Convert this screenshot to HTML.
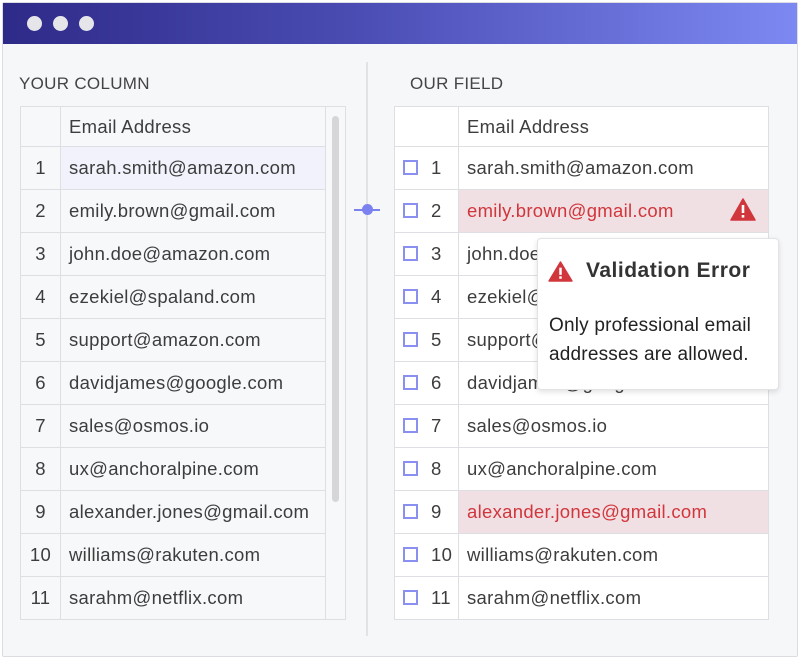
<!DOCTYPE html>
<html><head><style>
*{margin:0;padding:0;box-sizing:border-box}
body{width:800px;height:659px;background:#fff;font-family:"Liberation Sans",sans-serif;overflow:hidden;position:relative}
.win{position:absolute;left:2px;top:2px;width:796px;height:655px;border:1px solid #dcdde0;background:#f6f7f9;border-radius:2px}
.bar{position:absolute;left:0;top:0;right:0;height:41px;background:linear-gradient(90deg,#2e2a88,#4b4db4 45%,#7d89f2)}
.dot{position:absolute;top:13px;width:15px;height:15px;border-radius:50%;background:#e6e6ea}
.lbl{position:absolute;font-size:17px;color:#444;letter-spacing:.3px}
table{position:absolute;border-collapse:collapse;table-layout:fixed;font-size:18.5px;letter-spacing:.3px;color:#3d3d3d}
td{border:1px solid #dedfe2;height:43px;padding:0 8px;white-space:nowrap;overflow:visible}
.tl{left:20px;top:106px;width:325px;background:#f7f8fa}
.tr{left:394px;top:106px;width:374px;background:#fff}
tr.h td{height:40px}
.n{text-align:center}
.err td.e{background:#f1e0e3;color:#d0363c}
.cb{display:inline-block;width:15px;height:15px;border:2px solid #8a90f0;vertical-align:middle;margin-right:13px;position:relative;top:-2px}
.tip{position:absolute;left:537px;top:238px;width:242px;height:152px;background:#fff;border:1px solid #e3e3e6;border-radius:4px;box-shadow:0 2px 6px rgba(0,0,0,.12)}
</style></head><body>
<div class="win">
<div class="bar"><div class="dot" style="left:24px"></div><div class="dot" style="left:50px"></div><div class="dot" style="left:76px"></div></div>
</div>
<div class="lbl" style="left:19px;top:74px">YOUR COLUMN</div>
<div class="lbl" style="left:410px;top:74px">OUR FIELD</div>
<div style="position:absolute;left:366px;top:62px;width:2px;height:574px;background:#e2e3e6"></div>
<div style="position:absolute;left:354px;top:209px;width:26px;height:2px;background:#7b82ef"></div>
<div style="position:absolute;left:362px;top:204px;width:11px;height:11px;border-radius:50%;background:#7b82ef"></div>
<table class="tl">
<colgroup><col style="width:40px"><col style="width:265px"><col style="width:20px"></colgroup>
<tr class="h"><td></td><td>Email Address</td><td rowspan="12"></td></tr>
<tr><td class="n">1</td><td style="background:#f2f2fd">sarah.smith@amazon.com</td></tr>
<tr><td class="n">2</td><td>emily.brown@gmail.com</td></tr>
<tr><td class="n">3</td><td>john.doe@amazon.com</td></tr>
<tr><td class="n">4</td><td>ezekiel@spaland.com</td></tr>
<tr><td class="n">5</td><td>support@amazon.com</td></tr>
<tr><td class="n">6</td><td>davidjames@google.com</td></tr>
<tr><td class="n">7</td><td>sales@osmos.io</td></tr>
<tr><td class="n">8</td><td>ux@anchoralpine.com</td></tr>
<tr><td class="n">9</td><td>alexander.jones@gmail.com</td></tr>
<tr><td class="n">10</td><td>williams@rakuten.com</td></tr>
<tr><td class="n">11</td><td>sarahm@netflix.com</td></tr>
</table>
<div style="position:absolute;left:332px;top:116px;width:7px;height:386px;border-radius:4px;background:#d6d6d8"></div>
<table class="tr">
<colgroup><col style="width:64px"><col style="width:310px"></colgroup>
<tr class="h"><td></td><td>Email Address</td></tr>
<tr><td><span class="cb"></span>1</td><td>sarah.smith@amazon.com</td></tr>
<tr class="err"><td><span class="cb"></span>2</td><td class="e">emily.brown@gmail.com</td></tr>
<tr><td><span class="cb"></span>3</td><td>john.doe@amazon.com</td></tr>
<tr><td><span class="cb"></span>4</td><td>ezekiel@spaland.com</td></tr>
<tr><td><span class="cb"></span>5</td><td>support@amazon.com</td></tr>
<tr><td><span class="cb"></span>6</td><td>davidjames@google.com</td></tr>
<tr><td><span class="cb"></span>7</td><td>sales@osmos.io</td></tr>
<tr><td><span class="cb"></span>8</td><td>ux@anchoralpine.com</td></tr>
<tr class="err"><td><span class="cb"></span>9</td><td class="e">alexander.jones@gmail.com</td></tr>
<tr><td><span class="cb"></span>10</td><td>williams@rakuten.com</td></tr>
<tr><td><span class="cb"></span>11</td><td>sarahm@netflix.com</td></tr>
</table>
<svg style="position:absolute;left:730px;top:198px" width="26" height="23" viewBox="0 0 26 23"><path d="M13 1 L25 22 H1 Z" fill="#d0363c" stroke="#d0363c" stroke-linejoin="round" stroke-width="1.5"/><rect x="11.7" y="7" width="2.6" height="8" fill="#fff"/><rect x="11.7" y="17" width="2.6" height="2.6" fill="#fff"/></svg>
<div class="tip">
<svg style="position:absolute;left:10px;top:22px" width="25" height="21" viewBox="0 0 26 22"><path d="M13 1 L25 21 H1 Z" fill="#d0363c" stroke="#d0363c" stroke-linejoin="round" stroke-width="1.5"/><rect x="11.7" y="7" width="2.6" height="7.5" fill="#fff"/><rect x="11.7" y="16" width="2.6" height="2.6" fill="#fff"/></svg>
<div style="position:absolute;left:48px;top:20px;font-size:21px;font-weight:bold;color:#333;letter-spacing:.5px">Validation Error</div>
<div style="position:absolute;left:11px;top:72px;font-size:19px;line-height:29px;color:#222;letter-spacing:.2px">Only professional email<br>addresses are allowed.</div>
</div>
</body></html>
